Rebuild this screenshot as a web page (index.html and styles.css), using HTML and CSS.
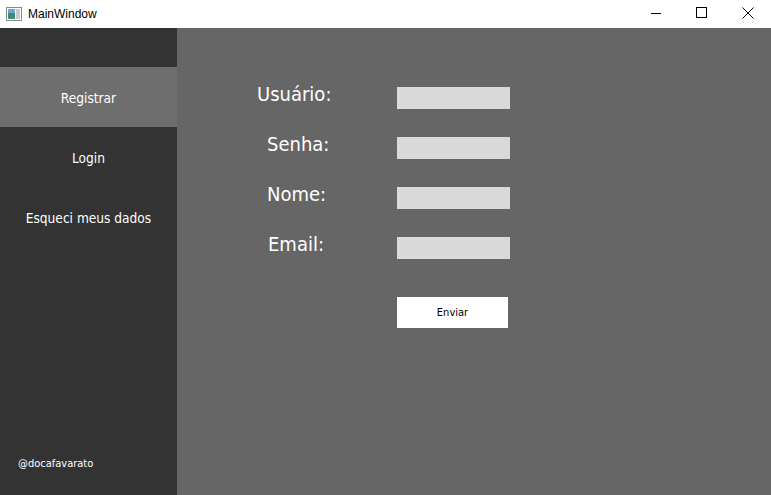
FILE: index.html
```html
<!DOCTYPE html>
<html>
<head>
<meta charset="utf-8">
<link rel="stylesheet" href="styles.css">
</head>
<body>
<div class="window">
  <div class="titlebar">
    <svg class="appicon" width="16" height="16" viewBox="0 0 16 16">
      <rect x="0.5" y="1.5" width="15" height="13" fill="#fff" stroke="#8a8a8a"/>
      <rect x="2" y="3" width="7" height="10" fill="#3f8a7a"/>
      <rect x="2" y="3" width="7" height="4" fill="#6aa7c9"/>
      <rect x="10" y="3" width="4" height="10" fill="#c9c9c9"/>
    </svg>
    <span class="title">MainWindow</span>
    <div class="controls">
      <svg class="ctl" width="46" height="28" viewBox="0 0 46 28"><line x1="18" y1="13.5" x2="28" y2="13.5" stroke="#000" stroke-width="1"/></svg>
      <svg class="ctl" width="46" height="28" viewBox="0 0 46 28"><rect x="17.5" y="7.5" width="10" height="10" fill="none" stroke="#000" stroke-width="1"/></svg>
      <svg class="ctl" width="46" height="28" viewBox="0 0 46 28"><path d="M17.5 7.5 L28.5 18.5 M28.5 7.5 L17.5 18.5" stroke="#000" stroke-width="1"/></svg>
    </div>
  </div>
  <div class="body">
    <nav class="sidebar">
      <div class="navitem active">Registrar</div>
      <div class="navitem">Login</div>
      <div class="navitem">Esqueci meus dados</div>
      <div class="spacer"></div>
      <div class="footer">@docafavarato</div>
    </nav>
    <main class="content">
      <div class="form">
        <div class="row"><span class="label first">Usuário:</span><span class="field"></span></div>
        <div class="row"><span class="label">Senha:</span><span class="field"></span></div>
        <div class="row"><span class="label">Nome:</span><span class="field"></span></div>
        <div class="row"><span class="label email">Email:</span><span class="field"></span></div>
        <div class="actions"><button class="send">Enviar</button></div>
      </div>
    </main>
  </div>
</div>
</body>
</html>
```
FILE: styles.css
```css
* { box-sizing: border-box; }
html, body { margin: 0; padding: 0; }
body { width: 771px; height: 495px; overflow: hidden; font-family: "DejaVu Sans Condensed", "DejaVu Sans", sans-serif; }
.window { width: 771px; height: 495px; display: flex; flex-direction: column; }
.titlebar { height: 28px; background: #fff; display: flex; align-items: center; font-family: "Liberation Sans", sans-serif; }
.appicon { margin-left: 6px; margin-right: 6px; }
.title { font-size: 12px; color: #000; }
.controls { margin-left: auto; display: flex; align-items: center; }
.ctl { display: block; }
.body { flex: 1; display: flex; }
.sidebar { width: 177px; background: #333333; display: flex; flex-direction: column; padding-top: 39px; }
.navitem { height: 60px; display: flex; align-items: center; justify-content: center; color: #fff; font-size: 13.6px; padding-top: 2px; }
.navitem.active { background: #6e6e6e; }
.spacer { flex: 1; }
.footer { color: #fff; font-size: 11px; padding-left: 18px; height: 38px; }
.content { flex: 1; background: #666666; padding-top: 59px; padding-left: 80px; }
.form { display: flex; flex-direction: column; }
.row { height: 50px; display: flex; align-items: flex-start; }
.label { width: 140px; color: #fff; font-size: 20px; line-height: 22px; margin-top: -4px; padding-left: 10px; }
.label.first { padding-left: 0; }
.label.email { padding-left: 11px; }
.field { width: 113px; height: 22px; background: #d9d9d9; }
.actions { padding-left: 140px; margin-top: 10px; }
.send { width: 111px; height: 31px; background: #fff; border: none; font-family: "DejaVu Sans Condensed", "DejaVu Sans", sans-serif; font-size: 11px; color: #000; padding: 0; }
```
